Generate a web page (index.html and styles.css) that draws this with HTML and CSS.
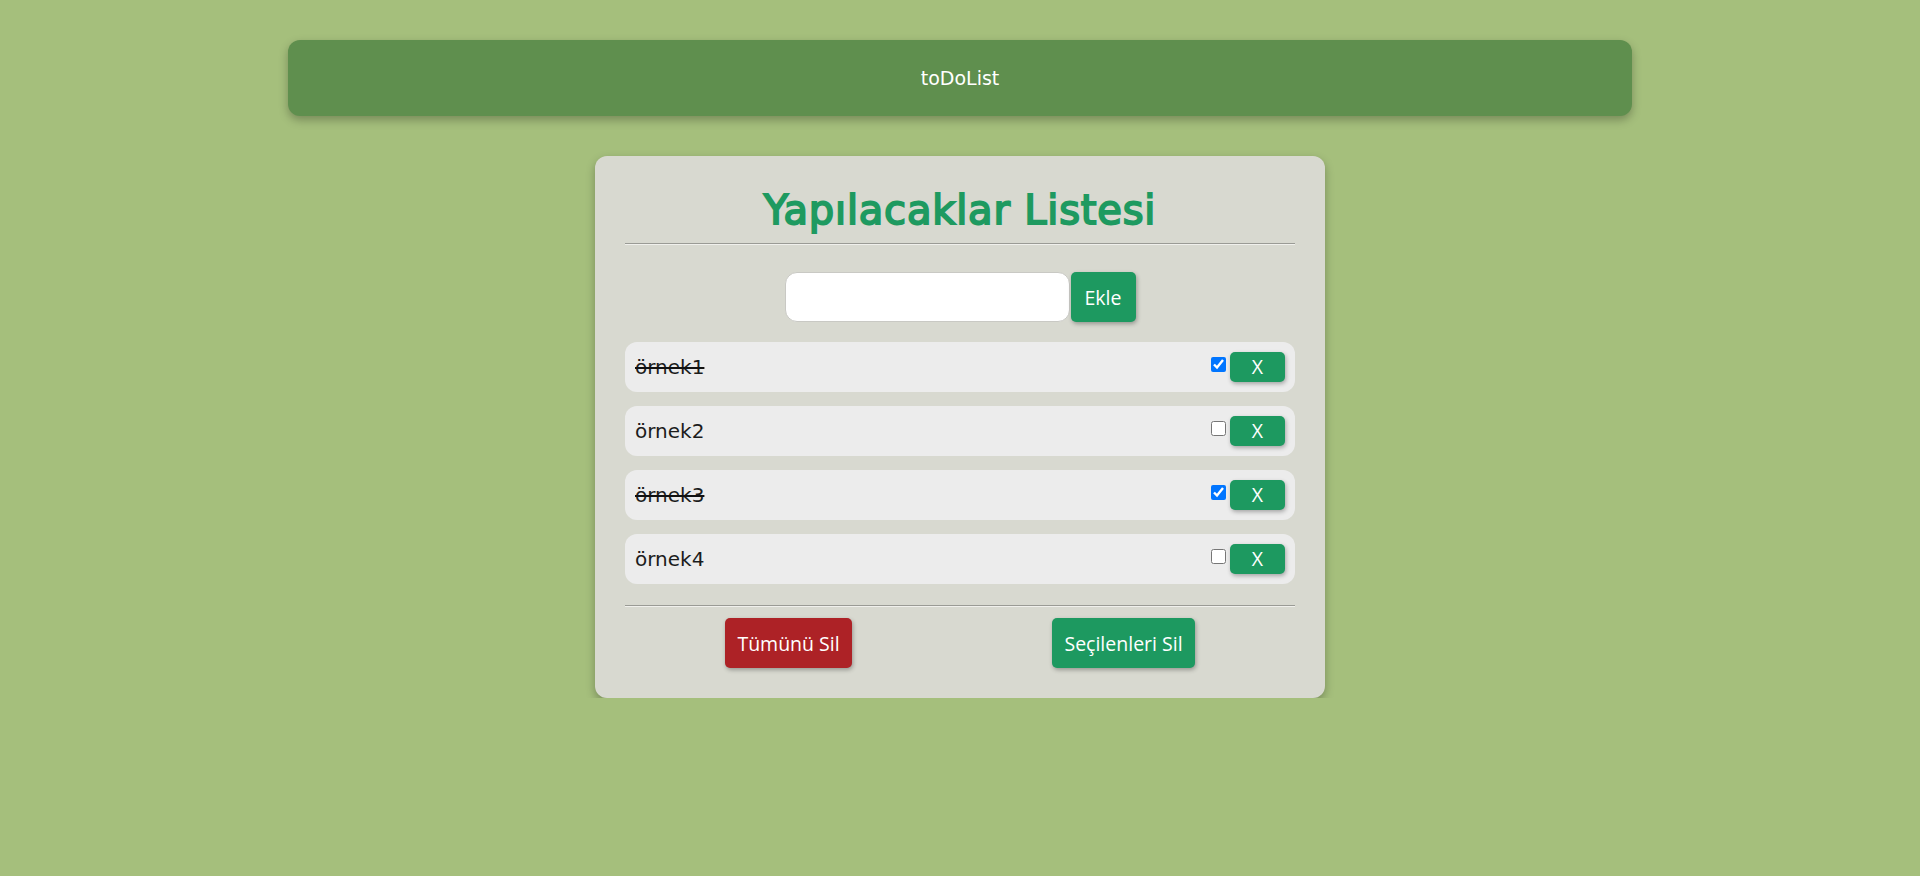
FILE: index.html
```html
<!DOCTYPE html>
<html lang="tr">
<head>
<meta charset="utf-8">
<title>toDoList</title>
<link rel="stylesheet" href="styles.css">
</head>
<body>
  <header class="topbar">
    <span class="brand">toDoList</span>
  </header>

  <main class="card">
    <h1 class="title">Yapılacaklar Listesi</h1>
    <hr class="divider">

    <form class="add-form">
      <input class="add-input" type="text">
      <button class="btn btn-add" type="button">Ekle</button>
    </form>

    <ul class="todo-list">
      <li class="todo-item">
        <span class="todo-text done">örnek1</span>
        <span class="todo-controls">
          <input class="todo-check" type="checkbox" checked>
          <button class="btn btn-x" type="button">X</button>
        </span>
      </li>
      <li class="todo-item">
        <span class="todo-text">örnek2</span>
        <span class="todo-controls">
          <input class="todo-check" type="checkbox">
          <button class="btn btn-x" type="button">X</button>
        </span>
      </li>
      <li class="todo-item">
        <span class="todo-text done">örnek3</span>
        <span class="todo-controls">
          <input class="todo-check" type="checkbox" checked>
          <button class="btn btn-x" type="button">X</button>
        </span>
      </li>
      <li class="todo-item">
        <span class="todo-text">örnek4</span>
        <span class="todo-controls">
          <input class="todo-check" type="checkbox">
          <button class="btn btn-x" type="button">X</button>
        </span>
      </li>
    </ul>

    <hr class="divider">

    <div class="actions">
      <button class="btn btn-big btn-danger" type="button">Tümünü Sil</button>
      <button class="btn btn-big" type="button">Seçilenleri Sil</button>
    </div>
  </main>
</body>
</html>
```

FILE: styles.css
```css
* {
  box-sizing: border-box;
}

html, body {
  margin: 0;
  background: #a5bf7c;
}

body {
  padding-top: 40px;
  font-family: "DejaVu Sans", Verdana, sans-serif;
  color: #1c1c1c;
}

.topbar {
  width: 1344px;
  height: 76px;
  margin: 0 auto;
  background: #5f8f4e;
  border-radius: 12px;
  box-shadow: 0 4px 10px rgba(0, 0, 0, 0.28);
  display: flex;
  align-items: center;
  justify-content: center;
}

.brand {
  color: #ffffff;
  font-size: 19px;
}

.card {
  width: 730px;
  margin: 40px auto 0;
  padding: 31px 30px 30px;
  background: #d8d9d0;
  border-radius: 12px;
  box-shadow: 0 4px 10px rgba(0, 0, 0, 0.28);
  display: flex;
  flex-direction: column;
}

.title {
  margin: 0;
  height: 46px;
  line-height: 46px;
  text-align: center;
  font-size: 40px;
  font-weight: normal;
  letter-spacing: 0.8px;
  color: #1e9a60;
  -webkit-text-stroke: 1.9px #1e9a60;
}

.divider {
  margin: 10px 0 0;
  height: 0;
  border: none;
  border-top: 1px solid #9a9b95;
  border-bottom: 1px solid #f0f0ec;
}

.add-form {
  margin: 27px 0 20px;
  display: flex;
  justify-content: center;
  gap: 1px;
}

.add-input {
  width: 285px;
  height: 50px;
  margin: 0;
  border: 1px solid #c9c9c4;
  border-radius: 12px;
  background: #ffffff;
  padding: 0 12px;
}

.btn {
  border: none;
  margin: 0;
  background: #1d9960;
  color: #ffffff;
  font-family: "Open Sans", "Noto Sans", sans-serif;
  font-size: 19.5px;
  border-radius: 5px;
  box-shadow: 1px 2px 4px rgba(0, 0, 0, 0.3);
  cursor: pointer;
  padding: 0;
}

.btn-add {
  width: 65px;
  height: 50px;
}

.todo-list {
  list-style: none;
  margin: 0;
  padding: 0;
  display: flex;
  flex-direction: column;
  gap: 14px;
}

.todo-item {
  height: 50px;
  padding: 0 10px;
  background: #ececec;
  border-radius: 12px;
  display: flex;
  align-items: center;
  justify-content: space-between;
}

.todo-text {
  font-size: 20px;
  color: #1c1c1c;
}

.todo-text.done {
  text-decoration: line-through;
  text-decoration-thickness: 2px;
  text-decoration-color: #111111;
}

.todo-controls {
  display: flex;
  align-items: center;
}

.todo-check {
  width: 15px;
  height: 15px;
  margin: 0 4px 5px 0;
}

.btn-x {
  width: 55px;
  height: 30px;
  line-height: 30px;
}

.todo-list + .divider {
  margin-top: 21px;
}

.actions {
  margin-top: 11px;
  display: flex;
  justify-content: space-around;
}

.btn-big {
  height: 50px;
  padding: 0 12.5px;
}

.btn-danger {
  background: #ad2226;
}
```
